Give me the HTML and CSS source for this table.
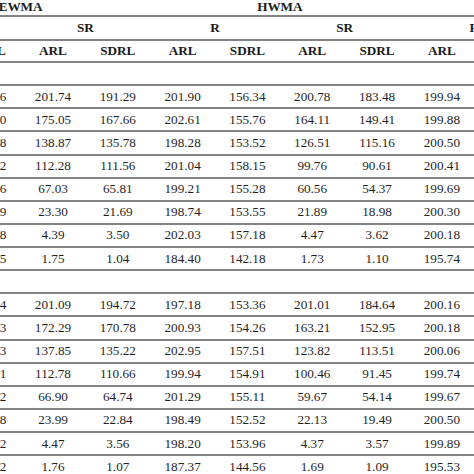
FILE: index.html
```html
<!DOCTYPE html>
<html>
<head>
<meta charset="utf-8">
<link rel="stylesheet" href="styles.css">
</head>
<body>
<div class="viewport">
<table class="results">
  <colgroup>
    <col><col><col><col><col><col><col><col><col><col>
  </colgroup>
  <thead>
    <tr class="r-chart">
      <th colspan="4">EWMA</th>
      <th colspan="4">HWMA</th>
      <th colspan="2"></th>
    </tr>
    <tr class="r-stat">
      <th colspan="2">R</th>
      <th colspan="2">SR</th>
      <th colspan="2">R</th>
      <th colspan="2">SR</th>
      <th colspan="2">R</th>
    </tr>
    <tr class="r-metric">
      <th>ARL</th><th>SDRL</th><th>ARL</th><th>SDRL</th><th>ARL</th><th>SDRL</th><th>ARL</th><th>SDRL</th><th>ARL</th><th>SDRL</th>
    </tr>
  </thead>
  <tbody>
    <tr class="r-gap"><td colspan="10"></td></tr>
    <tr><td>200.12</td><td>155.86</td><td>201.74</td><td>191.29</td><td>201.90</td><td>156.34</td><td>200.78</td><td>183.48</td><td>199.94</td><td>154.12</td></tr>
    <tr><td>199.83</td><td>154.20</td><td>175.05</td><td>167.66</td><td>202.61</td><td>155.76</td><td>164.11</td><td>149.41</td><td>199.88</td><td>155.03</td></tr>
    <tr><td>198.64</td><td>153.38</td><td>138.87</td><td>135.78</td><td>198.28</td><td>153.52</td><td>126.51</td><td>115.16</td><td>200.50</td><td>156.21</td></tr>
    <tr><td>201.47</td><td>156.72</td><td>112.28</td><td>111.56</td><td>201.04</td><td>158.15</td><td>99.76</td><td>90.61</td><td>200.41</td><td>154.87</td></tr>
    <tr><td>199.35</td><td>155.06</td><td>67.03</td><td>65.81</td><td>199.21</td><td>155.28</td><td>60.56</td><td>54.37</td><td>199.69</td><td>153.90</td></tr>
    <tr><td>200.61</td><td>153.19</td><td>23.30</td><td>21.69</td><td>198.74</td><td>153.55</td><td>21.89</td><td>18.98</td><td>200.30</td><td>155.44</td></tr>
    <tr><td>197.92</td><td>154.48</td><td>4.39</td><td>3.50</td><td>202.03</td><td>157.18</td><td>4.47</td><td>3.62</td><td>200.18</td><td>156.02</td></tr>
    <tr><td>186.20</td><td>143.25</td><td>1.75</td><td>1.04</td><td>184.40</td><td>142.18</td><td>1.73</td><td>1.10</td><td>195.74</td><td>150.63</td></tr>
    <tr class="r-gap"><td colspan="10"></td></tr>
    <tr><td>200.57</td><td>154.14</td><td>201.09</td><td>194.72</td><td>197.18</td><td>153.36</td><td>201.01</td><td>184.64</td><td>200.16</td><td>155.71</td></tr>
    <tr><td>199.06</td><td>155.23</td><td>172.29</td><td>170.78</td><td>200.93</td><td>154.26</td><td>163.21</td><td>152.95</td><td>200.18</td><td>154.39</td></tr>
    <tr><td>201.88</td><td>156.93</td><td>137.85</td><td>135.22</td><td>202.95</td><td>157.51</td><td>123.82</td><td>113.51</td><td>200.06</td><td>153.65</td></tr>
    <tr><td>198.45</td><td>153.71</td><td>112.78</td><td>110.66</td><td>199.94</td><td>154.91</td><td>100.46</td><td>91.45</td><td>199.74</td><td>155.12</td></tr>
    <tr><td>200.29</td><td>155.42</td><td>66.90</td><td>64.74</td><td>201.29</td><td>155.11</td><td>59.67</td><td>54.14</td><td>199.67</td><td>154.58</td></tr>
    <tr><td>199.71</td><td>154.98</td><td>23.99</td><td>22.84</td><td>198.49</td><td>152.52</td><td>22.13</td><td>19.49</td><td>200.50</td><td>156.30</td></tr>
    <tr><td>201.13</td><td>156.02</td><td>4.47</td><td>3.56</td><td>198.20</td><td>153.96</td><td>4.37</td><td>3.57</td><td>199.89</td><td>154.77</td></tr>
    <tr><td>187.66</td><td>144.32</td><td>1.76</td><td>1.07</td><td>187.37</td><td>144.56</td><td>1.69</td><td>1.09</td><td>195.53</td><td>151.08</td></tr>
  </tbody>
</table>
</div>
</body>
</html>
```

FILE: styles.css
```css
html, body {
  margin: 0;
  padding: 0;
  background: #ffffff;
}

.viewport {
  width: 474px;
  height: 474px;
  overflow: hidden;
}

.results {
  margin-top: -1px;
  margin-left: -109px;
  width: 648px;
  table-layout: fixed;
  border-collapse: separate;
  border-spacing: 0;
  font-family: "Liberation Serif", "Times New Roman", serif;
  font-size: 13.2px;
  color: #1f1f1f;
}

.results col {
  width: 64.8px;
}

.results th,
.results td {
  padding: 0;
  text-align: center;
  white-space: nowrap;
  border-bottom: 2px solid #838383;
  vertical-align: middle;
  line-height: 14px;
}

.results th {
  font-weight: bold;
  color: #1a1a1a;
}

.r-chart th {
  height: 16px;
}

.r-stat th {
  height: 22px;
}

.r-metric th {
  height: 20px;
}

.results td {
  height: 21.125px;
}
```
